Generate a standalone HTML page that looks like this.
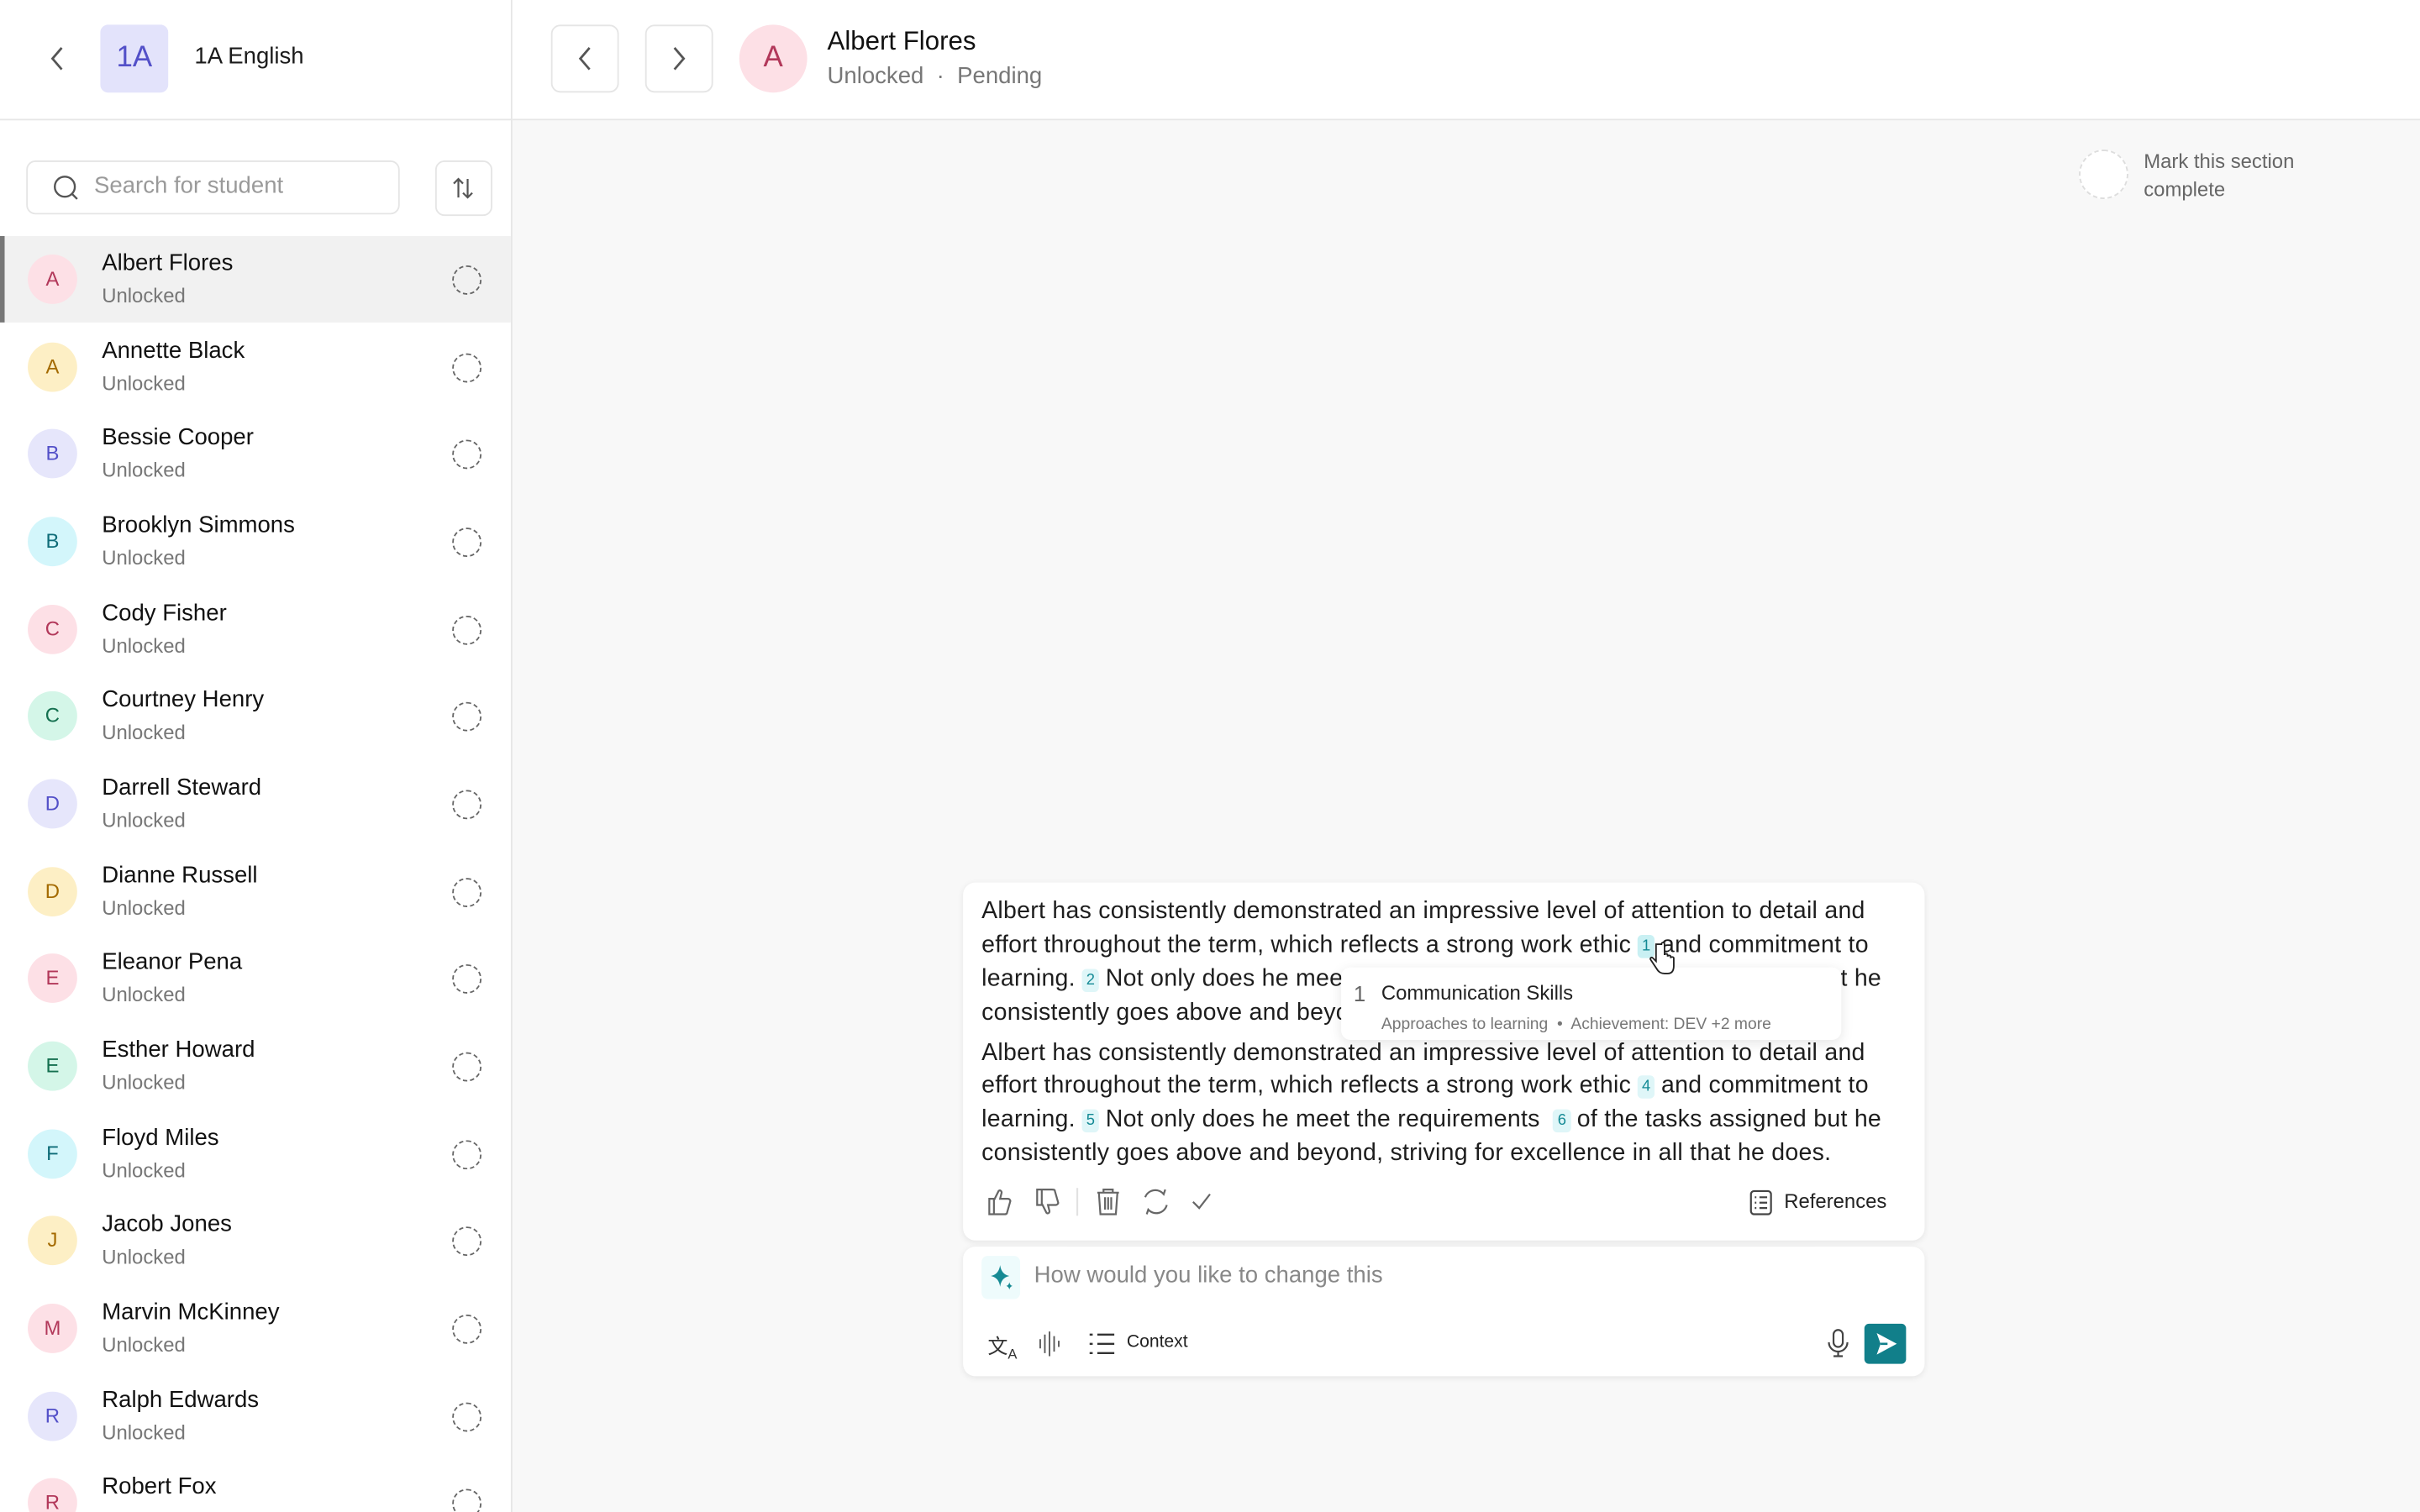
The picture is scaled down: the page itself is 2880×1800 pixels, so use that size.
<!DOCTYPE html>
<html><head><meta charset="utf-8">
<style>
*{box-sizing:border-box;margin:0;padding:0}
html,body{width:2880px;height:1800px;overflow:hidden;background:#f8f8f8}
#s{position:absolute;left:0;top:0;width:1568px;height:980px;overflow:hidden;transform:scale(1.836735);transform-origin:0 0;font-family:"Liberation Sans",sans-serif;color:#1b1b1b;background:#f8f8f8}
.abs{position:absolute}
.side{left:0;top:0;width:332px;height:980px;background:#fff;border-right:1px solid #e6e6e6}
.top{left:332px;top:0;width:1236px;height:78px;background:#fff;border-bottom:1px solid #e6e6e6}
.sidehead{left:0;top:0;width:332px;height:78px;border-bottom:1px solid #e6e6e6}
.btn{border:1px solid #e5e5e5;border-radius:6px;background:#fff}
.row{position:absolute;left:0;width:331px;height:56.67px;overflow:hidden}
.av{position:absolute;left:18px;width:32px;height:32px;border-radius:50%;font-size:13px;text-align:center;line-height:32px}
.nm{position:absolute;left:66px;font-size:15px;color:#111}
.st{position:absolute;left:66px;font-size:13px;color:#777}
.ck{position:absolute;left:293px;width:19px;height:19px;border:1.5px dashed #666;border-radius:50%}
.ln{position:absolute;left:636px;font-size:15.5px;white-space:nowrap;color:#1d1d1d;letter-spacing:0.15px}
.bd{display:inline-block;background:#dff6f8;color:#148a95;font-size:10px;padding:0 3px;border-radius:3px;line-height:15px;margin:0 4px;vertical-align:1px;letter-spacing:0}
</style></head><body><div id="s">
<div class="abs side"></div>
<div class="abs sidehead"></div>
<svg class="abs" style="left:30px;top:29px" width="14" height="18" viewBox="0 0 14 18"><path d="M10 2 L4 9 L10 16" fill="none" stroke="#555" stroke-width="1.5"/></svg>
<div class="abs" style="left:65px;top:16px;width:44px;height:44px;border-radius:5px;background:#e3e3fb;color:#5350c8;font-size:19px;text-align:center;line-height:44px">1A</div>
<div class="abs" style="left:126px;top:28px;font-size:15px">1A English</div>

<div class="abs btn" style="left:17px;top:104px;width:242px;height:35px"></div>
<svg class="abs" style="left:34px;top:113px" width="18" height="18" viewBox="0 0 18 18"><circle cx="8" cy="8" r="6.5" fill="none" stroke="#555" stroke-width="1.3"/><path d="M12.5 12.5 L16 16" stroke="#555" stroke-width="1.3"/></svg>
<div class="abs" style="left:61px;top:112px;font-size:15px;color:#9a9a9a">Search for student</div>
<div class="abs btn" style="left:282px;top:104px;width:37px;height:36px"></div>
<svg class="abs" style="left:291px;top:113px" width="18" height="18" viewBox="0 0 18 18"><path d="M6 15V3 M3 6 L6 3 L9 6 M12 3V15 M9 12 L12 15 L15 12" fill="none" stroke="#555" stroke-width="1.2"/></svg>

<div class="abs" style="left:0;top:153px;width:331px;height:56px;background:#f1f1f1;border-left:3px solid #777"></div>

<div class="abs top"></div>
<div class="abs btn" style="left:357px;top:16px;width:44px;height:44px"></div>
<div class="abs btn" style="left:418px;top:16px;width:44px;height:44px"></div>
<svg class="abs" style="left:372px;top:29px" width="14" height="18" viewBox="0 0 14 18"><path d="M10 2 L4 9 L10 16" fill="none" stroke="#555" stroke-width="1.5"/></svg>
<svg class="abs" style="left:433px;top:29px" width="14" height="18" viewBox="0 0 14 18"><path d="M4 2 L10 9 L4 16" fill="none" stroke="#555" stroke-width="1.5"/></svg>
<div class="abs" style="left:479px;top:16px;width:44px;height:44px;border-radius:50%;background:#fde0e6;color:#b2385a;font-size:19px;text-align:center;line-height:44px">A</div>
<div class="abs" style="left:536px;top:17px;font-size:17px;color:#111">Albert Flores</div>
<div class="abs" style="left:536px;top:41px;font-size:15px;color:#777">Unlocked &nbsp;·&nbsp; Pending</div>

<div class="abs" style="left:1347px;top:97px;width:32px;height:32px;border-radius:50%;background:#fff;border:1px dashed #ddd"></div>
<div class="abs" style="left:1389px;top:96px;font-size:13px;color:#666;line-height:18px">Mark this section<br>complete</div>

<div class="abs" style="left:624px;top:572px;width:623px;height:232px;background:#fff;border-radius:8px;box-shadow:0 1px 4px rgba(0,0,0,.08)"></div>
<div class="ln" style="top:582px">Albert has consistently demonstrated an impressive level of attention to detail and</div>
<div class="ln" style="top:604px">effort throughout the term, which reflects a strong work ethic<span class="bd" style="background:#c9f0f3">1</span>and commitment to</div>
<div class="ln" style="top:626px">learning.<span class="bd">2</span>Not only does he meet the requirements <span class="bd">3</span>of the tasks assigned but he</div>
<div class="ln" style="top:648px">consistently goes above and beyond, striving for excellence in all that he does.</div>
<div class="ln" style="top:674px">Albert has consistently demonstrated an impressive level of attention to detail and</div>
<div class="ln" style="top:695px">effort throughout the term, which reflects a strong work ethic<span class="bd">4</span>and commitment to</div>
<div class="ln" style="top:717px">learning.<span class="bd">5</span>Not only does he meet the requirements <span class="bd">6</span>of the tasks assigned but he</div>
<div class="ln" style="top:739px">consistently goes above and beyond, striving for excellence in all that he does.</div>

<div class="abs" style="left:869px;top:627px;width:324px;height:47px;background:#fff;border-radius:6px;box-shadow:0 2px 8px rgba(0,0,0,.1)"></div>
<div class="abs" style="left:877px;top:636px;font-size:14px;color:#666">1</div>
<div class="abs" style="left:895px;top:636px;font-size:13px;color:#222">Communication Skills</div>
<div class="abs" style="left:895px;top:658px;font-size:10.5px;color:#777">Approaches to learning &nbsp;•&nbsp; Achievement: DEV +2 more</div>
<svg class="abs" style="left:1068px;top:610px" width="20" height="24" viewBox="0 0 20 24"><path d="M5 2 v11 l-2 -2 c-1 -1 -2 0 -1.5 1 l4 6 c1 2 3 3 5 3 h2 c3 0 4 -2 4 -5 v-5 c0 -1 -2 -1 -2 0 v-1 c0 -1 -2 -1 -2 0 v-1 c0 -1 -2 -1 -2 0 v-7 c0 -1.5 -2 -1.5 -2 0z" fill="#fff" stroke="#222" stroke-width="1"/></svg>

<svg class="abs" style="left:639px;top:769px" width="160" height="20" viewBox="0 0 160 20">
<g fill="none" stroke="#666" stroke-width="1.2">
<path d="M2 8h3v10H2z M5 9 l3-6 c1-1 2 0 2 1 l-1 4 h5 c1 0 2 1 1.5 2 l-2 7 c0 1-1 1-2 1 H5"/>
<path d="M33 12h3V2h-3z M36 11 l3 6 c1 1 2 0 2-1 l-1-4 h5 c1 0 2-1 1.5-2 l-2-7 c0-1-1-1-2-1 H36"/>
<path d="M59 1v18" stroke="#e2e2e2"/>
<path d="M72 4h14 M76 4V2h6v2 M73 4l1 14h10l1-14 M77 7v8 M79 7v8 M81 7v8"/>
<path d="M103 7a7 7 0 0 1 12-2 l1-3 M117 12a7 7 0 0 1-12 3 l-1 3"/>
<path d="M134 10 l4 4 l7-9"/>
</g></svg>
<svg class="abs" style="left:1133px;top:771px" width="16" height="17" viewBox="0 0 16 17"><rect x="1.5" y="1" width="13" height="15" rx="2" fill="none" stroke="#444" stroke-width="1.2"/><path d="M4 5h1M7 5h5M4 8.5h1M7 8.5h5M4 12h1M7 12h5" stroke="#444" stroke-width="1.2"/></svg>
<div class="abs" style="left:1156px;top:771px;font-size:13px;color:#222">References</div>

<div class="abs" style="left:624px;top:808px;width:623px;height:84px;background:#fff;border-radius:8px;box-shadow:0 1px 4px rgba(0,0,0,.08)"></div>
<div class="abs" style="left:636px;top:814px;width:25px;height:28px;border-radius:4px;background:#eefbfc"></div>
<svg class="abs" style="left:641px;top:819px" width="16" height="18" viewBox="0 0 16 18"><path d="M7 1 Q7.8 7 13 8 Q7.8 9 7 15 Q6.2 9 1 8 Q6.2 7 7 1z" fill="#168a94"/><path d="M13 12 Q13.3 14 15 14.5 Q13.3 15 13 17 Q12.7 15 11 14.5 Q12.7 14 13 12z" fill="#168a94"/></svg>
<div class="abs" style="left:670px;top:818px;font-size:15px;color:#888">How would you like to change this</div>
<div class="abs" style="left:640px;top:862px;font-size:13px;color:#333">文<sub style="font-size:9px">A</sub></div>
<svg class="abs" style="left:672px;top:862px" width="16" height="18" viewBox="0 0 16 18"><path d="M2 6v6M5 3v12M8 1v16M11 4v10M14 7v4" stroke="#555" stroke-width="1"/></svg>
<svg class="abs" style="left:705px;top:863px" width="18" height="16" viewBox="0 0 18 16"><path d="M1 2h2M6 2h11M1 8h2M6 8h11M1 14h2M6 14h11" stroke="#333" stroke-width="1.3"/></svg>
<div class="abs" style="left:730px;top:864px;font-size:11.5px;color:#222">Context</div>
<svg class="abs" style="left:1183px;top:861px" width="16" height="20" viewBox="0 0 16 20"><rect x="5" y="1" width="6" height="11" rx="3" fill="none" stroke="#444" stroke-width="1.2"/><path d="M2 9a6 6 0 0 0 12 0 M8 15v3 M5 18h6" fill="none" stroke="#444" stroke-width="1.2"/></svg>
<div class="abs" style="left:1208px;top:858px;width:27px;height:26px;border-radius:3px;background:#117f8a"></div>
<svg class="abs" style="left:1213px;top:862px" width="18" height="18" viewBox="0 0 18 18"><path d="M3 2 L16 9 L3 16 L5.5 9z" fill="#fff"/><path d="M5.5 9H10" stroke="#117f8a" stroke-width="1.4"/></svg>

<div class="row" style="top:153px"><div class="av" style="top:12px;background:#fde0e6;color:#b2385a">A</div><div class="nm" style="top:9px">Albert Flores</div><div class="st" style="top:31px">Unlocked</div><div class="ck" style="top:19px"></div></div>
<div class="row" style="top:209.67px"><div class="av" style="top:12px;background:#fdefc5;color:#a46a00">A</div><div class="nm" style="top:9px">Annette Black</div><div class="st" style="top:31px">Unlocked</div><div class="ck" style="top:19px"></div></div>
<div class="row" style="top:266.34px"><div class="av" style="top:12px;background:#e6e6fb;color:#5350c8">B</div><div class="nm" style="top:9px">Bessie Cooper</div><div class="st" style="top:31px">Unlocked</div><div class="ck" style="top:19px"></div></div>
<div class="row" style="top:323px"><div class="av" style="top:12px;background:#d3f6fb;color:#0e6c78">B</div><div class="nm" style="top:9px">Brooklyn Simmons</div><div class="st" style="top:31px">Unlocked</div><div class="ck" style="top:19px"></div></div>
<div class="row" style="top:379.7px"><div class="av" style="top:12px;background:#fde0e6;color:#b2385a">C</div><div class="nm" style="top:9px">Cody Fisher</div><div class="st" style="top:31px">Unlocked</div><div class="ck" style="top:19px"></div></div>
<div class="row" style="top:436.35px"><div class="av" style="top:12px;background:#d4f6e8;color:#157050">C</div><div class="nm" style="top:9px">Courtney Henry</div><div class="st" style="top:31px">Unlocked</div><div class="ck" style="top:19px"></div></div>
<div class="row" style="top:493px"><div class="av" style="top:12px;background:#e6e6fb;color:#5350c8">D</div><div class="nm" style="top:9px">Darrell Steward</div><div class="st" style="top:31px">Unlocked</div><div class="ck" style="top:19px"></div></div>
<div class="row" style="top:549.7px"><div class="av" style="top:12px;background:#fdefc5;color:#a46a00">D</div><div class="nm" style="top:9px">Dianne Russell</div><div class="st" style="top:31px">Unlocked</div><div class="ck" style="top:19px"></div></div>
<div class="row" style="top:606.4px"><div class="av" style="top:12px;background:#fde0e6;color:#b2385a">E</div><div class="nm" style="top:9px">Eleanor Pena</div><div class="st" style="top:31px">Unlocked</div><div class="ck" style="top:19px"></div></div>
<div class="row" style="top:663px"><div class="av" style="top:12px;background:#d4f6e8;color:#157050">E</div><div class="nm" style="top:9px">Esther Howard</div><div class="st" style="top:31px">Unlocked</div><div class="ck" style="top:19px"></div></div>
<div class="row" style="top:719.7px"><div class="av" style="top:12px;background:#d3f6fb;color:#0e6c78">F</div><div class="nm" style="top:9px">Floyd Miles</div><div class="st" style="top:31px">Unlocked</div><div class="ck" style="top:19px"></div></div>
<div class="row" style="top:776.4px"><div class="av" style="top:12px;background:#fdefc5;color:#a46a00">J</div><div class="nm" style="top:9px">Jacob Jones</div><div class="st" style="top:31px">Unlocked</div><div class="ck" style="top:19px"></div></div>
<div class="row" style="top:833px"><div class="av" style="top:12px;background:#fde0e6;color:#b2385a">M</div><div class="nm" style="top:9px">Marvin McKinney</div><div class="st" style="top:31px">Unlocked</div><div class="ck" style="top:19px"></div></div>
<div class="row" style="top:889.7px"><div class="av" style="top:12px;background:#e6e6fb;color:#5350c8">R</div><div class="nm" style="top:9px">Ralph Edwards</div><div class="st" style="top:31px">Unlocked</div><div class="ck" style="top:19px"></div></div>
<div class="row" style="top:946.4px;height:33.6px"><div class="av" style="top:12px;background:#fde0e6;color:#b2385a">R</div><div class="nm" style="top:9px">Robert Fox</div><div class="ck" style="top:19px"></div></div>
</div>
</body></html>
